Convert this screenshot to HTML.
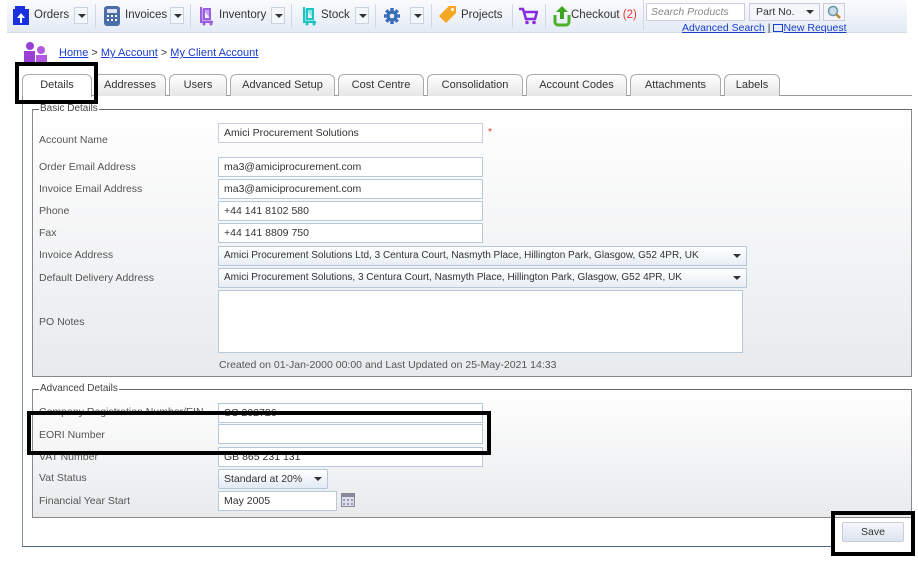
<!DOCTYPE html>
<html><head><meta charset="utf-8"><style>
*{margin:0;padding:0;box-sizing:border-box}
body{width:918px;height:561px;background:#fff;font-family:"Liberation Sans",sans-serif;font-size:10.5px;color:#333;position:relative;overflow:hidden}
.a{position:absolute}
.tb{left:7px;top:0;width:900px;height:33px;background:linear-gradient(#fafbfd,#e4ebf5);border-bottom:1px solid #d5dde8}
.ti{position:absolute;top:9px;font-size:11.5px;color:#333;white-space:nowrap}
.sep{position:absolute;top:4px;width:1px;height:24px;background:#d0d8e4}
.dd{position:absolute;top:7px;width:14px;height:17px;border:1px solid #c9d2de;background:#f3f6fa}
.dd:after{content:"";position:absolute;left:3px;top:6px;border:4px solid transparent;border-top:4px solid #333}
.tab{position:absolute;top:74px;height:22px;border:1px solid #aaa;border-bottom:none;border-radius:6px 6px 0 0;background:linear-gradient(#fff,#e6e6e6);font-size:11px;text-align:center;line-height:20px;color:#333}
.lbl{position:absolute;left:39px;color:#555;font-size:10.5px}
.in{position:absolute;left:218px;width:265px;height:20px;border:1px solid #b5c8dc;background:#fff;padding-left:5px;line-height:18px;font-size:10.5px;color:#333;white-space:nowrap;overflow:hidden}
.fs{position:absolute;border:1px solid #888;border-top:1px solid #666;background:linear-gradient(#fff,#e8eaec)}
.lg{position:absolute;background:#fff;font-size:10px;color:#444;padding:0 1px}
.box{position:absolute;border:4px solid #000}
a{color:#1a3ecc;text-decoration:underline}
</style></head><body>
<div class="a tb">
 <svg class="a" style="left:5px;top:5px" width="18" height="21"><rect x="1" y="4" width="16" height="16" fill="#1a2fe0"/><rect x="3" y="1" width="10" height="5" fill="#1a2fe0"/><path d="M9 8l-4 5h3v5h2v-5h3z" fill="#fff"/></svg>
 <span class="ti" style="left:27px">Orders</span><div class="dd" style="left:67px"></div><div class="sep" style="left:88px"></div>
 <svg class="a" style="left:97px;top:6px" width="16" height="20"><rect width="16" height="20" rx="3" fill="#4a6fa5"/><rect x="3" y="3" width="10" height="4" fill="#dde"/><g fill="#fff"><rect x="3" y="9" width="2" height="2"/><rect x="7" y="9" width="2" height="2"/><rect x="11" y="9" width="2" height="2"/><rect x="3" y="13" width="2" height="2"/><rect x="7" y="13" width="2" height="2"/><rect x="11" y="13" width="2" height="2"/></g></svg>
 <span class="ti" style="left:118px">Invoices</span><div class="dd" style="left:163px"></div><div class="sep" style="left:183px"></div>
 <svg class="a" style="left:192px;top:6px" width="16" height="20"><path d="M2 1v15h12M5 3h6v10H5z" stroke="#9b5fe0" stroke-width="2" fill="#c7a4f0"/><circle cx="5" cy="18" r="1.5" fill="#9b5fe0"/><circle cx="12" cy="18" r="1.5" fill="#9b5fe0"/></svg>
 <span class="ti" style="left:212px">Inventory</span><div class="dd" style="left:264px"></div><div class="sep" style="left:284px"></div>
 <svg class="a" style="left:295px;top:6px" width="16" height="20"><path d="M2 1v15h12M5 3h6v10H5z" stroke="#1cc4c4" stroke-width="2" fill="#8ee6e6"/><circle cx="5" cy="18" r="1.5" fill="#1cc4c4"/><circle cx="12" cy="18" r="1.5" fill="#1cc4c4"/></svg>
 <span class="ti" style="left:314px">Stock</span><div class="dd" style="left:348px"></div><div class="sep" style="left:368px"></div>
 <svg class="a" style="left:376px;top:7px" width="18" height="18"><g stroke="#3a6fb8" stroke-width="3.5"><path d="M9 1v16M1 9h16M3.3 3.3l11.4 11.4M14.7 3.3L3.3 14.7"/></g><circle cx="9" cy="9" r="5.5" fill="#3a6fb8"/><circle cx="9" cy="9" r="2.3" fill="#eef2f8"/></svg>
 <div class="dd" style="left:403px"></div><div class="sep" style="left:424px"></div>
 <svg class="a" style="left:431px;top:5px" width="20" height="20"><path d="M11 1h7v7l-10 10-7-7z" fill="#f5a623"/><circle cx="14.5" cy="4.5" r="1.5" fill="#fff"/></svg>
 <span class="ti" style="left:454px">Projects</span><div class="sep" style="left:505px"></div>
 <svg class="a" style="left:511px;top:7px" width="20" height="18"><path d="M1 2h4l3 10h9l2-7H6" stroke="#8a2be2" stroke-width="2.5" fill="none"/><circle cx="9" cy="15.5" r="1.8" fill="#8a2be2"/><circle cx="16" cy="15.5" r="1.8" fill="#8a2be2"/></svg>
 <div class="sep" style="left:538px"></div>
 <svg class="a" style="left:545px;top:5px" width="20" height="22"><path d="M3 10v7a3 3 0 003 3h8a3 3 0 003-3v-7" stroke="#4caf28" stroke-width="3" fill="none"/><path d="M10 1l-6 6h4v7h4V7h4z" fill="#3ba520"/></svg>
 <span class="ti" style="left:564px">Checkout <span style="color:#e33">(2)</span></span>
 <div class="sep" style="left:636px;height:30px;top:0"></div>
 <div class="a" style="left:639px;top:3px;width:99px;height:18px;background:#fff;border:1px solid #ccd;font-style:italic;color:#888;font-size:10.5px;padding:2px 4px">Search Products</div>
 <div class="a" style="left:742px;top:3px;width:71px;height:18px;border:1px solid #ccd;background:#f4f6fa;font-size:10.5px;padding:2px 6px">Part No.<span style="position:absolute;right:5px;top:6px;border:4px solid transparent;border-top:4px solid #333"></span></div>
 <div class="a" style="left:816px;top:3px;width:22px;height:18px;border:1px solid #ccd;background:#f4f6fa"><svg width="20" height="16"><circle cx="9" cy="7" r="4.5" fill="#cde" stroke="#69a" stroke-width="1.5"/><path d="M12 10l4 4" stroke="#b88a3a" stroke-width="2.5"/></svg></div>
 <div class="a" style="left:675px;top:22px;font-size:10.5px;white-space:nowrap"><a>Advanced Search</a> | <span style="display:inline-block;width:10px;height:8px;border:1.5px solid #1a3ecc;vertical-align:-1px"></span><a>New Request</a></div>
</div>
<svg class="a" style="left:24px;top:42px" width="24" height="22"><circle cx="6" cy="4" r="4" fill="#9b3fd4"/><rect x="0" y="9" width="11" height="13" fill="#9b3fd4"/><circle cx="17" cy="8" r="4" fill="#b45ae0"/><rect x="12" y="13" width="11" height="9" fill="#b45ae0"/></svg>
<div class="a" style="left:59px;top:47px;font-size:11px;color:#333"><a>Home</a> &gt; <a>My Account</a> &gt; <a>My Client Account</a></div>
<div class="a" style="left:22px;top:95px;width:890px;height:1px;background:#999"></div>
<div class="tab" style="left:22px;width:70px;background:#fff;height:23px">Details</div>
<div class="tab" style="left:94px;width:72px">Addresses</div>
<div class="tab" style="left:169px;width:58px">Users</div>
<div class="tab" style="left:230px;width:105px">Advanced Setup</div>
<div class="tab" style="left:338px;width:86px">Cost Centre</div>
<div class="tab" style="left:427px;width:96px">Consolidation</div>
<div class="tab" style="left:526px;width:101px">Account Codes</div>
<div class="tab" style="left:630px;width:91px">Attachments</div>
<div class="tab" style="left:724px;width:56px">Labels</div>
<div class="a" style="left:22px;top:96px;width:1px;height:451px;background:#7d8fa6"></div>
<div class="a" style="left:22px;top:546px;width:809px;height:1px;background:#4a6585"></div>
<div class="fs" style="left:32px;top:109px;width:880px;height:268px"></div>
<div class="lg" style="left:39px;top:103px">Basic Details</div>
<div class="lbl" style="top:134px">Account Name</div>
<div class="in" style="top:123px;border-color:#ccd">Amici Procurement Solutions</div><span class="a" style="left:488px;top:126px;color:#e33">*</span>
<div class="lbl" style="top:161px">Order Email Address</div><div class="in" style="top:157px">ma3@amiciprocurement.com</div>
<div class="lbl" style="top:183px">Invoice Email Address</div><div class="in" style="top:179px">ma3@amiciprocurement.com</div>
<div class="lbl" style="top:205px">Phone</div><div class="in" style="top:201px">+44 141 8102 580</div>
<div class="lbl" style="top:227px">Fax</div><div class="in" style="top:223px">+44 141 8809 750</div>
<div class="lbl" style="top:249px">Invoice Address</div><div class="in" style="top:246px;width:529px;background:linear-gradient(#fff,#e8eef6);font-size:10px">Amici Procurement Solutions Ltd, 3 Centura Court, Nasmyth Place, Hillington Park, Glasgow, G52 4PR, UK<span style="position:absolute;right:5px;top:7px;border:4px solid transparent;border-top:4px solid #333"></span></div>
<div class="lbl" style="top:272px">Default Delivery Address</div><div class="in" style="top:268px;width:529px;background:linear-gradient(#fff,#e8eef6);font-size:10px">Amici Procurement Solutions, 3 Centura Court, Nasmyth Place, Hillington Park, Glasgow, G52 4PR, UK<span style="position:absolute;right:5px;top:7px;border:4px solid transparent;border-top:4px solid #333"></span></div>
<div class="lbl" style="top:316px">PO Notes</div><div class="in" style="top:290px;width:525px;height:63px"></div>
<div class="a" style="left:219px;top:359px;color:#555">Created on 01-Jan-2000 00:00 and Last Updated on 25-May-2021 14:33</div>
<div class="fs" style="left:32px;top:389px;width:880px;height:129px"></div>
<div class="lg" style="left:39px;top:383px">Advanced Details</div>
<div class="lbl" style="top:406px">Company Registration Number/EIN</div><div class="in" style="top:403px">SC 202726</div>
<div class="lbl" style="top:429px">EORI Number</div><div class="in" style="top:424px"></div>
<div class="lbl" style="top:451px">VAT Number</div><div class="in" style="top:447px">GB 865 231 131</div>
<div class="lbl" style="top:472px">Vat Status</div><div class="in" style="top:469px;width:110px;background:linear-gradient(#fff,#e2eaf5);border-radius:2px">Standard at 20%<span style="position:absolute;right:5px;top:7px;border:4px solid transparent;border-top:4px solid #333"></span></div>
<div class="lbl" style="top:495px">Financial Year Start</div><div class="in" style="top:491px;width:119px">May 2005</div>
<svg class="a" style="left:341px;top:493px" width="14" height="14"><rect x="0.5" y="0.5" width="13" height="13" fill="#dde" stroke="#889"/><rect x="1" y="1" width="12" height="3" fill="#889"/><g fill="#99a"><rect x="2" y="6" width="2" height="2"/><rect x="6" y="6" width="2" height="2"/><rect x="10" y="6" width="2" height="2"/><rect x="2" y="10" width="2" height="2"/><rect x="6" y="10" width="2" height="2"/><rect x="10" y="10" width="2" height="2"/></g></svg>
<div class="a" style="left:842px;top:522px;width:62px;height:20px;border:1px solid #c5cfdb;border-radius:2px;background:linear-gradient(#f4f7fb,#dde5ef);text-align:center;line-height:18px;font-size:10.5px">Save</div>
<div class="box" style="left:15px;top:62px;width:83px;height:42px"></div>
<div class="box" style="left:27px;top:411px;width:464px;height:44px"></div>
<div class="box" style="left:831px;top:511px;width:84px;height:45px"></div>
</body></html>
